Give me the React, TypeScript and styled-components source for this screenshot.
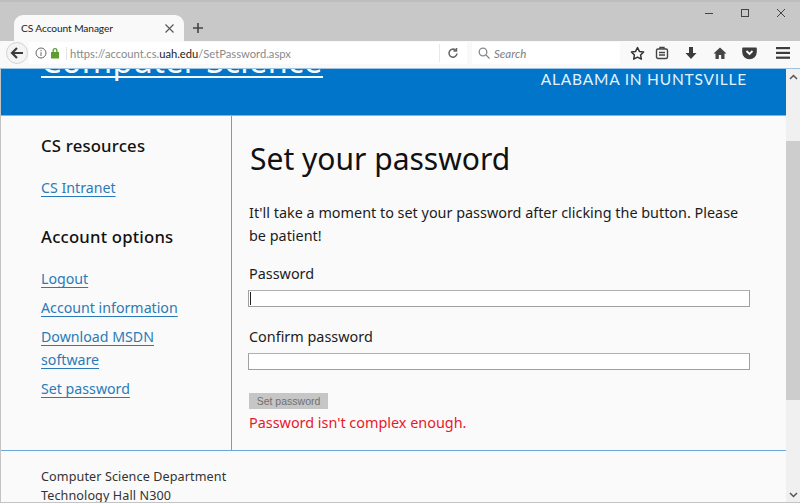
import styled, { createGlobalStyle } from 'styled-components';

const GlobalStyle = createGlobalStyle`
  html, body {
    margin: 0;
    padding: 0;
    height: 503px;
    overflow: hidden;
    background: #fafafa;
    font-family: "Noto Sans", "Open Sans", sans-serif;
  }
`;

const Window = styled.div`
  width: 800px;
  height: 503px;
  box-sizing: border-box;
  border-bottom: 1px solid #c4c4c4;
  display: flex;
  flex-direction: column;
  overflow: hidden;
`;

const TabStrip = styled.div`
  height: 41px;
  flex: none;
  box-sizing: border-box;
  background: #c8c8c8;
  border-top: 2px solid #bdbdbd;
  padding-top: 13px;
  display: flex;
  align-items: stretch;
`;

const Tab = styled.div`
  width: 170px;
  margin-left: 14px;
  box-sizing: border-box;
  padding: 0 9px 0 7px;
  background: #f9f9f9;
  border-radius: 9px 9px 0 0;
  display: flex;
  align-items: center;
  justify-content: space-between;
  font: 10.2px Lato, sans-serif;
  letter-spacing: -0.1px;
  color: #222;
`;

const NewTab = styled.div`
  width: 28px;
  display: flex;
  align-items: center;
  justify-content: center;
  color: #444;
`;

const WindowButtons = styled.div`
  margin: -13px 1px 0 auto;
  height: 22px;
  display: flex;
  align-items: center;
  color: #444;
`;

const WindowButton = styled.div`
  width: 36px;
  display: flex;
  justify-content: center;
`;

const Toolbar = styled.div`
  height: 28px;
  flex: none;
  box-sizing: border-box;
  background: #f9f9f9;
  border-bottom: 1px solid #9ec3e0;
  display: flex;
  align-items: center;
  padding: 0 0 3px 6px;
  color: #444;
`;

const BackButton = styled.div`
  width: 22px;
  height: 22px;
  flex: none;
  box-sizing: border-box;
  border: 1px solid #d4d4d4;
  border-radius: 50%;
  background: #f4f4f4;
  display: flex;
  align-items: center;
  justify-content: center;
`;

const UrlBar = styled.div`
  width: 438px;
  height: 22px;
  flex: none;
  margin-left: 1px;
  box-sizing: border-box;
  background: #fff;
  display: flex;
  align-items: center;
  gap: 3px;
  padding: 0 8px 0 6px;
`;

const UrlText = styled.div`
  font: 11.2px Lato, sans-serif;
  color: #8a8a8a;
  margin-left: 3px;
  padding-left: 3px;
  border-left: 1px solid #e4e4e4;
  white-space: nowrap;
  flex: 1;
  b {
    font-weight: 400;
    color: #222;
  }
`;

const ReloadCell = styled.div`
  height: 18px;
  padding-left: 7px;
  border-left: 1px solid #e8e8e8;
  display: flex;
  align-items: center;
`;

const SearchBar = styled.div`
  width: 148px;
  height: 22px;
  flex: none;
  margin-left: 5px;
  box-sizing: border-box;
  background: #fff;
  display: flex;
  align-items: center;
  gap: 4px;
  padding-left: 6px;
  font: italic 11.5px Lato, sans-serif;
  color: #808080;
`;

const ToolIcons = styled.div`
  display: flex;
  align-items: center;
  margin-left: 8px;
  flex: 1;
`;

const ToolIcon = styled.div<{ $w: number }>`
  width: ${p => p.$w}px;
  flex: none;
  display: flex;
  justify-content: center;
`;

const Viewport = styled.div`
  flex: 1;
  min-height: 0;
  display: flex;
  overflow: hidden;
  border-left: 1px solid #c4c4c4;
`;

const Page = styled.div`
  flex: 1;
  min-width: 0;
  background: #fafafa;
  display: flex;
  flex-direction: column;
`;

const Banner = styled.header`
  height: 47px;
  flex: none;
  background: #0075c9;
  border-bottom: 1px solid #80b6de;
  box-sizing: border-box;
  overflow: hidden;
  display: flex;
  justify-content: space-between;
  padding: 0 38px 0 40px;
  color: #fff;
`;

const SiteTitle = styled.a`
  display: block;
  height: 37px;
  margin-top: -30px;
  font: 32.5px/44px "Noto Sans", sans-serif;
  color: #f4f9fd;
  letter-spacing: 0.3px;
  border-bottom: 2px solid #f4f9fd;
  white-space: nowrap;
`;

const University = styled.div`
  font: 15.5px/20px Lato, sans-serif;
  letter-spacing: 0.78px;
  margin-right: 1px;
  color: #e6f2fa;
`;

const Columns = styled.div`
  height: 335px;
  flex: none;
  display: flex;
  border-bottom: 1px solid #6aa8d8;
  box-sizing: border-box;
`;

const Sidebar = styled.nav`
  width: 231px;
  flex: none;
  box-sizing: border-box;
  border-right: 1px solid #5fa5d8;
  padding: 18px 30px 0 40px;
`;

const SideHeading = styled.h3<{ $top?: number }>`
  margin: ${p => p.$top ?? 0}px 0 0;
  font: 500 16.7px/24px "Noto Sans", sans-serif;
  letter-spacing: 0.2px;
  color: #111;
`;

const LinkList = styled.ul`
  list-style: none;
  margin: 18px 0 0;
  padding: 0;
  display: flex;
  flex-direction: column;
  gap: 6px;
`;

const SideLink = styled.a`
  font: 14.2px/23px "Noto Sans", sans-serif;
  color: #2a7ab9;
  text-decoration: underline;
  text-underline-offset: 3px;
  text-decoration-thickness: 1px;
`;

const Content = styled.main`
  flex: 1;
  min-width: 0;
  box-sizing: border-box;
  padding: 23px 36px 0 17px;
`;

const Title = styled.h1`
  margin: 0 0 0 1px;
  font: 400 30px/40px "Noto Sans", sans-serif;
  color: #111;
`;

const Intro = styled.p`
  margin: 22px 0 0;
  font: 14.4px/23px "Noto Sans", sans-serif;
  color: #1c1c1c;
`;

const Field = styled.label<{ $top: number }>`
  display: block;
  margin-top: ${p => p.$top}px;
  font: 14.4px/23px "Noto Sans", sans-serif;
  color: #1c1c1c;
`;

const TextBox = styled.div<{ $caret?: boolean }>`
  height: 17px;
  margin: 5px 0 0 -1px;
  box-sizing: border-box;
  background: #fff;
  border: 1px solid #a0a0a0;
  border-top-color: #b0b0b0;
  display: flex;
  align-items: center;
  padding-left: 1px;
  &::before {
    content: '';
    display: ${p => (p.$caret ? 'block' : 'none')};
    width: 1px;
    height: 13px;
    background: #222;
  }
`;

const SubmitButton = styled.button`
  display: block;
  width: 79px;
  height: 16px;
  margin: 23px 0 0;
  padding: 0;
  border: 0;
  background: #c6c6c6;
  font: 10.5px/16px "Liberation Sans", sans-serif;
  color: #707070;
`;

const ErrorText = styled.div`
  margin-top: 2px;
  font: 14.4px/23px "Noto Sans", sans-serif;
  color: #e8182c;
`;

const Footer = styled.footer`
  padding: 16px 0 0 40px;
  font: 12.6px/19px "Noto Sans", sans-serif;
  color: #333;
  letter-spacing: 0.1px;
`;

const Scrollbar = styled.div`
  width: 14px;
  flex: none;
  background: #f0f0f0;
  display: flex;
  flex-direction: column;
  align-items: center;
  color: #555;
`;

const ScrollArrow = styled.div`
  height: 15px;
  flex: none;
  display: flex;
  align-items: center;
  justify-content: center;
`;

const ScrollThumb = styled.div`
  align-self: stretch;
  height: 259px;
  margin-top: 57px;
  flex: none;
  background: #cdcdcd;
`;

const ScrollTrack = styled.div`
  flex: 1;
`;

const sideLinks = ['Logout', 'Account information', 'Download MSDN software', 'Set password'];

const Chevron = ({ up }: { up?: boolean }) => (
  <svg width="9" height="6" viewBox="0 0 9 6" fill="none" stroke="currentColor" strokeWidth="1.5">
    <path d={up ? 'M1 5l3.5-3.5L8 5' : 'M1 1l3.5 3.5L8 1'} />
  </svg>
);

export default function App() {
  return (
    <Window>
      <GlobalStyle />
      <TabStrip>
        <Tab>
          CS Account Manager
          <svg width="11" height="11" viewBox="0 0 11 11" stroke="#555" strokeWidth="1.1">
            <path d="M1.5 1.5l8 8M9.5 1.5l-8 8" />
          </svg>
        </Tab>
        <NewTab>
          <svg width="12" height="12" viewBox="0 0 12 12" stroke="currentColor" strokeWidth="1.6">
            <path d="M6 1v10M1 6h10" />
          </svg>
        </NewTab>
        <WindowButtons>
          <WindowButton>
            <svg width="10" height="10" viewBox="0 0 10 10" stroke="currentColor" strokeWidth="1">
              <path d="M1 5.5h8" />
            </svg>
          </WindowButton>
          <WindowButton>
            <svg width="10" height="10" viewBox="0 0 10 10" fill="none" stroke="currentColor" strokeWidth="1">
              <rect x="1.5" y="1.5" width="7" height="7" />
            </svg>
          </WindowButton>
          <WindowButton>
            <svg width="10" height="10" viewBox="0 0 10 10" stroke="currentColor" strokeWidth="1">
              <path d="M1 1l8 8M9 1l-8 8" />
            </svg>
          </WindowButton>
        </WindowButtons>
      </TabStrip>

      <Toolbar>
        <BackButton>
          <svg width="14" height="12" viewBox="0 0 14 12" fill="none" stroke="#3c3c3c" strokeWidth="2.2">
            <path d="M13 6H2.5M7 1L2 6l5 5" />
          </svg>
        </BackButton>
        <UrlBar>
          <svg width="12" height="12" viewBox="0 0 12 12" fill="none" stroke="#666" strokeWidth="1">
            <circle cx="6" cy="6" r="5" />
            <path d="M6 5.2V9M6 3v1.2" />
          </svg>
          <svg width="10" height="12" viewBox="0 0 10 12" fill="#5c9e31">
            <path d="M2.5 5V3.5a2.5 2.5 0 0 1 5 0V5h1.5v6.5H1V5zM3.8 5h2.4V3.500a1.200 1.200 0 0 0-2.400 0z" />
          </svg>
          <UrlText>
            https://account.cs.<b>uah.edu</b>/SetPassword.aspx
          </UrlText>
          <ReloadCell>
            <svg width="12" height="12" viewBox="0 0 12 12" fill="none" stroke="#666" strokeWidth="1.5">
              <path d="M10 6.500A4 4 0 1 1 8.500 3M9.500 1v3h-3" />
            </svg>
          </ReloadCell>
        </UrlBar>
        <SearchBar>
          <svg width="12" height="12" viewBox="0 0 12 12" fill="none" stroke="#888" strokeWidth="1.3">
            <circle cx="5" cy="5" r="3.800" />
            <path d="M8 8l3.500 3.500" />
          </svg>
          Search
        </SearchBar>
        <ToolIcons>
          <ToolIcon $w={18}>
            <svg width="15" height="15" viewBox="0 0 15 15" fill="none" stroke="#333" strokeWidth="1.5" strokeLinejoin="round">
              <path d="M7.500 1.500l1.900 3.900 4.200.6-3 3 .7 4.200-3.800-2-3.800 2 .7-4.200-3-3 4.200-.6z" />
            </svg>
          </ToolIcon>
          <ToolIcon $w={32}>
            <svg width="14" height="14" viewBox="0 0 14 14" fill="none" stroke="#444" strokeWidth="1.400">
              <rect x="1.500" y="3" width="11" height="9.500" rx="1.500" />
              <path d="M5 3V1.500h4V3M4 6.500h6M4 9h6" />
            </svg>
          </ToolIcon>
          <ToolIcon $w={26}>
            <svg width="14" height="14" viewBox="0 0 14 14" fill="#3c3c3c">
              <path d="M5 1h4v6h3.500L7 13 1.500 7H5z" />
            </svg>
          </ToolIcon>
          <ToolIcon $w={32}>
            <svg width="14" height="14" viewBox="0 0 14 14" fill="#444">
              <path d="M7 1.500L.5 7.500h2v5.500h3.300V9h2.400v4h3.300V7.500h2z" />
            </svg>
          </ToolIcon>
          <ToolIcon $w={26}>
            <svg width="15" height="14" viewBox="0 0 15 14">
              <path d="M1 1.500h13a.8.8 0 0 1 .8.8V6a7.300 7.300 0 0 1-14.600 0V2.300A.8.8 0 0 1 1 1.500z" fill="#3c3c3c" />
              <path d="M4.500 5l3 3 3-3" fill="none" stroke="#fff" strokeWidth="1.800" />
            </svg>
          </ToolIcon>
          <ToolIcon $w={42}>
            <svg width="14" height="12" viewBox="0 0 14 12" fill="#3c3c3c">
              <rect y="0" width="14" height="2.200" />
              <rect y="4.800" width="14" height="2.200" />
              <rect y="9.600" width="14" height="2.200" />
            </svg>
          </ToolIcon>
        </ToolIcons>
      </Toolbar>

      <Viewport>
        <Page>
          <Banner>
            <SiteTitle>Computer Science</SiteTitle>
            <University>ALABAMA IN HUNTSVILLE</University>
          </Banner>
          <Columns>
            <Sidebar>
              <SideHeading>CS resources</SideHeading>
              <LinkList>
                <li>
                  <SideLink>CS Intranet</SideLink>
                </li>
              </LinkList>
              <SideHeading $top={26}>Account options</SideHeading>
              <LinkList>
                {sideLinks.map(label => (
                  <li key={label}>
                    <SideLink>{label}</SideLink>
                  </li>
                ))}
              </LinkList>
            </Sidebar>
            <Content>
              <Title>Set your password</Title>
              <Intro>It'll take a moment to set your password after clicking the button. Please be patient!</Intro>
              <Field $top={15}>
                Password
                <TextBox $caret />
              </Field>
              <Field $top={18}>
                Confirm password
                <TextBox />
              </Field>
              <SubmitButton>Set password</SubmitButton>
              <ErrorText>Password isn't complex enough.</ErrorText>
            </Content>
          </Columns>
          <Footer>
            Computer Science Department
            <br />
            Technology Hall N300
          </Footer>
        </Page>
        <Scrollbar>
          <ScrollArrow>
            <Chevron up />
          </ScrollArrow>
          <ScrollThumb />
          <ScrollTrack />
          <ScrollArrow>
            <Chevron />
          </ScrollArrow>
        </Scrollbar>
      </Viewport>
    </Window>
  );
}
